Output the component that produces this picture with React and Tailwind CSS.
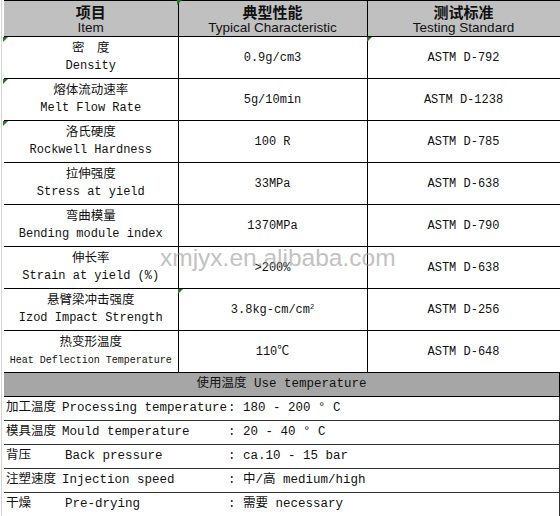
const rows = [
  { cn: '密　度', en: 'Density', value: '0.9g/cm3', std: 'ASTM D-792' },
  { cn: '熔体流动速率', en: 'Melt Flow Rate', value: '5g/10min', std: 'ASTM D-1238' },
  { cn: '洛氏硬度', en: 'Rockwell Hardness', value: '100 R', std: 'ASTM D-785' },
  { cn: '拉伸强度', en: 'Stress at yield', value: '33MPa', std: 'ASTM D-638' },
  { cn: '弯曲模量', en: 'Bending module index', value: '1370MPa', std: 'ASTM D-790' },
  { cn: '伸长率', en: 'Strain at yield (%)', value: '>200%', std: 'ASTM D-638' },
  { cn: '悬臂梁冲击强度', en: 'Izod Impact Strength', value: 'cm2', std: 'ASTM D-256' },
  { cn: '热变形温度', en: 'Heat Deflection Temperature', value: '110℃', std: 'ASTM D-648', small: true },
];

const usage = [
  { cn: '加工温度', en: 'Processing temperature', value: '180 - 200 ° C' },
  { cn: '模具温度', en: 'Mould temperature', value: '20 - 40 ° C' },
  { cn: '背压', en: 'Back pressure', value: 'ca.10 - 15 bar', indent: true },
  { cn: '注塑速度', en: 'Injection speed', value: '中/高 medium/high' },
  { cn: '干燥', en: 'Pre-drying', value: '需要 necessary', indent: true },
];

// excel error-indicator corner
const Marker = ({ className }) => (
  <div className={`absolute w-0 h-0 border-t-[5px] border-r-[5px] border-t-[#1f7a1f] border-r-transparent ${className}`} />
);

const mono = "font-['Liberation_Mono','Noto_Sans_CJK_SC',monospace]";

export default function App() {
  return (
    <div className="relative w-[560px] h-[516px] bg-white overflow-hidden">
      <div className="pl-[2px] border-l border-[#d4d4d4] ml-[1px]">
        <table className="border-collapse table-fixed w-[556px]">
          <colgroup>
            <col className="w-[174px]" />
            <col className="w-[189px]" />
            <col className="w-[193px]" />
          </colgroup>
          <thead>
            <tr className="h-[36px] bg-[#c0c0c0] text-[#111]">
              {[
                ['项目', 'Item'],
                ['典型性能', 'Typical Characteristic'],
                ['测试标准', 'Testing Standard'],
              ].map(([cn, en], i) => (
                <th key={i} className={`p-0 pt-[1px] border-t border-b border-black ${i > 0 ? 'border-l' : ''} ${i === 2 ? 'border-r' : ''} text-center align-middle`}>
                  <div className="font-['Noto_Sans_CJK_SC',sans-serif] font-bold text-[15px] leading-[17px]">{cn}</div>
                  <div className="font-['Liberation_Sans',sans-serif] font-normal text-[13.5px] leading-[15px]">{en}</div>
                </th>
              ))}
            </tr>
          </thead>
          <tbody className={`${mono} text-[12px] text-[#111]`}>
            {rows.map((r, i) => (
              <tr key={i} className="h-[42px]">
                <td className="p-0 border-b border-black text-center align-middle">
                  <div className="leading-[17px] text-[12.5px]">{r.cn}</div>
                  <div className={`leading-[17px] ${r.small ? 'text-[10px]' : 'text-[12px]'} whitespace-pre`}>{r.en}</div>
                </td>
                <td className="p-0 border-b border-l border-black text-center align-middle">
                  {r.value === 'cm2' ? (
                    <span>3.8kg-cm/cm<sup className="text-[7px]">2</sup></span>
                  ) : (
                    r.value
                  )}
                </td>
                <td className="p-0 border-b border-l border-r border-black text-center align-middle">{r.std}</td>
              </tr>
            ))}
          </tbody>
        </table>
        <div className={`h-[24px] bg-[#a6a6a6] border-r border-b border-black flex items-center justify-center w-[556px] ${mono} text-[12.5px] text-[#111]`}>
          使用温度 Use temperature
        </div>
        <div className={`w-[556px] ${mono} text-[12.5px] text-[#111]`}>
          {usage.map((u, i) => (
            <div key={i} className="h-[24px] border-r border-b border-[#333] grid grid-cols-[56px_166px_334px] items-center pl-[2px]">
              <span className="whitespace-nowrap">{u.cn}</span>
              <span className={`whitespace-nowrap ${u.indent ? 'pl-[3px]' : ''}`}>{u.en}</span>
              <span className="whitespace-pre">: {u.value}</span>
            </div>
          ))}
        </div>
      </div>

      <Marker className="left-[3px] top-[37px]" />
      <Marker className="left-[3px] top-[79px]" />
      <Marker className="left-[3px] top-[121px]" />
      <Marker className="left-[177px] top-[0px]" />
      <Marker className="left-[367px] top-[37px]" />
      <Marker className="left-[178px] top-[289px]" />

      <div className="absolute left-[160px] top-[240px] font-['Liberation_Sans',sans-serif] text-[24.5px] text-[#9a9a9a] opacity-60 pointer-events-none">
        xmjyx.en.alibaba.com
      </div>
    </div>
  );
}
